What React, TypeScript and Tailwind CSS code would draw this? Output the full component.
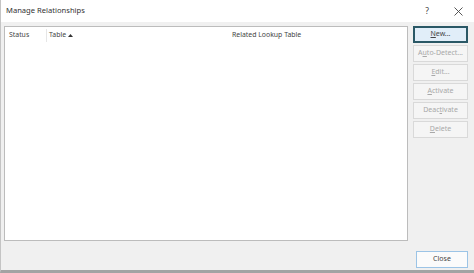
import React from 'react';

const font = { fontFamily: '"Noto Sans", "Open Sans", Arial, sans-serif' };

// botón deshabilitado de la columna derecha
function SideButton({ pre, key1, post }: { pre: string; key1: string; post: string }) {
  return (
    <div className="h-[17px] w-[55px] flex items-center justify-center border border-[#d9d9d9] bg-[#f5f5f5] text-[7px] text-[#a8a8a8]">
      {pre}
      <span className="underline">{key1}</span>
      {post}
    </div>
  );
}

export default function App() {
  return (
    <div
      style={font}
      className="w-[474px] h-[273px] flex flex-col bg-[#f0f0f0] border-l border-[#c4c4c4] border-b-[3px] border-b-[#a3a3a3] overflow-hidden"
    >
      {/* Title bar */}
      <div className="h-[22px] shrink-0 bg-white flex items-center pl-[5px] text-[7.6px] text-[#333]">
        <span className="flex-1">Manage Relationships</span>
        <span className="w-[14px] text-center text-[8.5px] text-[#444] mr-[20px]">?</span>
        <svg className="mr-[11px]" width="9" height="9" viewBox="0 0 9 9">
          <path d="M0.5 0.5 L8.5 8.5 M8.5 0.5 L0.5 8.5" stroke="#444" strokeWidth="0.9" />
        </svg>
      </div>

      {/* Content */}
      <div className="flex pt-[4px] pl-[3px]">
        <div className="w-[404px] h-[215px] bg-white border border-[#bcbcbc]">
          <div className="flex items-center h-[17px] text-[6.9px] text-[#444]">
            <span className="w-[41px] pl-[4px]">Status</span>
            <span className="w-px h-[13px] bg-[#e6e6e6]" />
            <span className="w-[185px] pl-[2px] flex items-center gap-[2px]">
              Table
              <svg width="5" height="3" viewBox="0 0 5 3">
                <path d="M0 3 L2.5 0 L5 3 Z" fill="#333" />
              </svg>
            </span>
            <span>Related Lookup Table</span>
          </div>
        </div>

        <div className="ml-[5px] flex flex-col gap-[2px]">
          <div className="h-[17px] w-[55px] flex items-center justify-center border-2 border-[#2a5866] bg-[#e1eef9] text-[7px] text-[#444]">
            <span className="underline">N</span>ew...
          </div>
          <SideButton pre="A" key1="u" post="to-Detect..." />
          <SideButton pre="" key1="E" post="dit..." />
          <SideButton pre="" key1="A" post="ctivate" />
          <SideButton pre="Deac" key1="t" post="ivate" />
          <SideButton pre="" key1="D" post="elete" />
        </div>
      </div>

      {/* Footer */}
      <div className="flex justify-end pr-[6px] pt-[10px]">
        <div className="h-[17px] w-[52px] flex items-center justify-center border border-[#9cc4e6] bg-[#fbfbfb] text-[7px] text-[#444]">
          Close
        </div>
      </div>
    </div>
  );
}
